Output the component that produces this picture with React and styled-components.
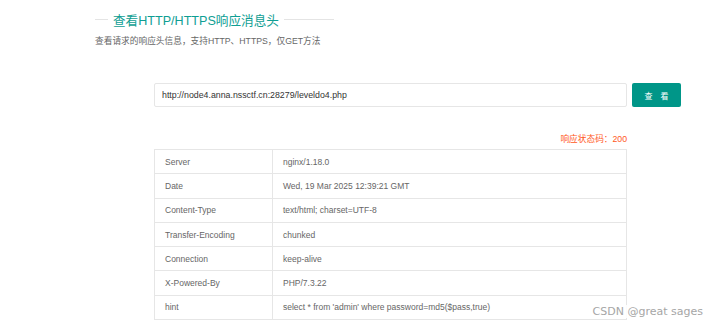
import styled, { createGlobalStyle } from "styled-components";

const GlobalStyle = createGlobalStyle`
  html, body {
    margin: 0;
    padding: 0;
    background: #ffffff;
    font-family: "Liberation Sans", "Noto Sans CJK SC", sans-serif;
  }
`;

const Page = styled.div`
  position: relative;
  width: 718px;
  height: 322px;
  overflow: hidden;
  padding: 9px 0 0 95px;
  box-sizing: border-box;
`;

const TitleRow = styled.div`
  display: flex;
  align-items: center;
  gap: 5px;
  height: 20px;
`;

const Line = styled.span`
  display: block;
  width: ${(p) => p.$w}px;
  height: 1px;
  background: #e4e4e4;
`;

const Title = styled.h2`
  margin: 0;
  font-weight: 400;
  font-size: 12.6px;
  color: #0f9e93;
  white-space: nowrap;
`;

const Subtitle = styled.p`
  margin: 5px 0 0;
  font-size: 8.7px;
  color: #666666;
  white-space: nowrap;
`;

const Main = styled.div`
  margin: 36px 0 0 59px;
  width: 527px;
`;

const SearchRow = styled.div`
  display: flex;
  gap: 5px;
  align-items: stretch;
`;

const UrlInput = styled.input`
  width: 473px;
  height: 24px;
  box-sizing: border-box;
  padding: 0 7px;
  border: 1px solid #e6e6e6;
  border-radius: 2px;
  font-family: "Liberation Sans", sans-serif;
  font-size: 8.8px;
  color: #333333;
  outline: none;
`;

const SearchButton = styled.button`
  width: 49px;
  height: 24px;
  border: 0;
  border-radius: 2px;
  background: #009688;
  color: #ffffff;
  font-family: "Noto Sans CJK SC", sans-serif;
  font-size: 8px;
  letter-spacing: 8px;
  padding: 0 0 0 8px;
  cursor: pointer;
`;

const Status = styled.div`
  width: 473px;
  margin-top: 25px;
  text-align: right;
  font-size: 8.7px;
  color: #ff5722;
  line-height: 14px;
`;

const Table = styled.table`
  width: 473px;
  margin-top: 3px;
  border-collapse: collapse;
  table-layout: fixed;
`;

const Cell = styled.td`
  height: 23.3px;
  padding: 0 10px;
  border: 1px solid #e6e6e6;
  font-size: 8.5px;
  color: #666666;
  white-space: nowrap;
  width: ${(p) => (p.$key ? "97px" : "auto")};
`;

const Watermark = styled.div`
  position: absolute;
  right: 15px;
  bottom: 4px;
  font-family: "DejaVu Sans", sans-serif;
  font-size: 11px;
  color: #a6a6a6;
  background: rgba(255, 255, 255, 0.85);
  padding-left: 4px;
`;

const headers = [
  ["Server", "nginx/1.18.0"],
  ["Date", "Wed, 19 Mar 2025 12:39:21 GMT"],
  ["Content-Type", "text/html; charset=UTF-8"],
  ["Transfer-Encoding", "chunked"],
  ["Connection", "keep-alive"],
  ["X-Powered-By", "PHP/7.3.22"],
  ["hint", "select * from 'admin' where password=md5($pass,true)"],
];

const App = () => {
  return (
    <>
      <GlobalStyle />
      <Page>
        <TitleRow>
          <Line $w={13} />
          <Title>查看HTTP/HTTPS响应消息头</Title>
          <Line $w={50} />
        </TitleRow>
        <Subtitle>查看请求的响应头信息，支持HTTP、HTTPS，仅GET方法</Subtitle>
        <Main>
          <SearchRow>
            <UrlInput defaultValue="http://node4.anna.nssctf.cn:28279/leveldo4.php" />
            <SearchButton>查看</SearchButton>
          </SearchRow>
          <Status>响应状态码：200</Status>
          <Table>
            <tbody>
              {headers.map(([k, v]) => (
                <tr key={k}>
                  <Cell $key>{k}</Cell>
                  <Cell>{v}</Cell>
                </tr>
              ))}
            </tbody>
          </Table>
        </Main>
        <Watermark>CSDN @great sages</Watermark>
      </Page>
    </>
  );
};

export default App;
